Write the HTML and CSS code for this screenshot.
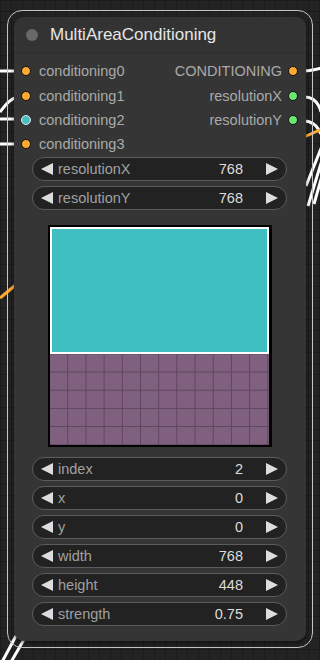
FILE: index.html
```
<!DOCTYPE html>
<html lang="en">
<head>
    <meta charset="UTF-8">
    <meta name="viewport" content="width=device-width, initial-scale=1.0">
    <title>MultiAreaConditioning</title>
    <link rel="stylesheet" href="styles.css">
</head>
<body>

<svg class="wires" width="320" height="660" viewBox="0 0 320 660">
    <g fill="none" stroke="#fff" stroke-width="3">
        <path d="M0 71 L18 71"/>
        <path d="M0 112 C5 106, 9 99, 18 97"/>
        <path d="M0 119 L18 119"/>
        <path d="M0 144 L18 144"/>
        <path d="M2 662 L17 634"/>
        <path d="M11 662 L26 636"/>
        <path d="M304 71 C312 71, 316 69, 322 68"/>
        <path d="M304 97 C314 97, 319 104, 321 112"/>
        <path d="M304 121 C313 121, 318 127, 321 134"/>
        <path d="M322 146 L306 186"/>
        <path d="M322 160 L308 206"/>
        <path d="M322 176 L314 204"/>
    </g>
    <g fill="none" stroke="#ffa931" stroke-width="3">
        <path d="M0 298 L18 283"/>
        <path d="M304 137 L322 129"/>
    </g>
</svg>

<div class="selected">
    <div class="node">
        <div class="title">
            <span class="title-dot"></span>
            <span class="title-text">MultiAreaConditioning</span>
        </div>

        <div class="slots">
            <div class="slot-row">
                <div class="slot"><span class="dot cond"></span>conditioning0</div>
                <div class="slot out">CONDITIONING<span class="dot cond"></span></div>
            </div>
            <div class="slot-row">
                <div class="slot"><span class="dot cond"></span>conditioning1</div>
                <div class="slot out">resolutionX<span class="dot int"></span></div>
            </div>
            <div class="slot-row">
                <div class="slot"><span class="dot active"></span>conditioning2</div>
                <div class="slot out">resolutionY<span class="dot int"></span></div>
            </div>
            <div class="slot-row">
                <div class="slot"><span class="dot cond"></span>conditioning3</div>
            </div>
        </div>

        <div class="widgets">
            <div class="widget"><span class="arrow-l"></span><span class="w-label">resolutionX</span><span class="w-value">768</span><span class="arrow-r"></span></div>
            <div class="widget"><span class="arrow-l"></span><span class="w-label">resolutionY</span><span class="w-value">768</span><span class="arrow-r"></span></div>
        </div>

        <div class="preview">
            <div class="area" style="height: 127px"></div>
        </div>

        <div class="widgets">
            <div class="widget"><span class="arrow-l"></span><span class="w-label">index</span><span class="w-value">2</span><span class="arrow-r"></span></div>
            <div class="widget"><span class="arrow-l"></span><span class="w-label">x</span><span class="w-value">0</span><span class="arrow-r"></span></div>
            <div class="widget"><span class="arrow-l"></span><span class="w-label">y</span><span class="w-value">0</span><span class="arrow-r"></span></div>
            <div class="widget"><span class="arrow-l"></span><span class="w-label">width</span><span class="w-value">768</span><span class="arrow-r"></span></div>
            <div class="widget"><span class="arrow-l"></span><span class="w-label">height</span><span class="w-value">448</span><span class="arrow-r"></span></div>
            <div class="widget"><span class="arrow-l"></span><span class="w-label">strength</span><span class="w-value">0.75</span><span class="arrow-r"></span></div>
        </div>
    </div>
</div>

</body>
</html>
```

FILE: styles.css
```
body {
    margin: 0;
    width: 320px;
    height: 660px;
    overflow: hidden;
    position: relative;
    font-family: "Liberation Sans", Arial, sans-serif;
    background-color: #232323;
    background-image:
        linear-gradient(to right, #1b1b1b 1px, transparent 1px),
        linear-gradient(to bottom, #1b1b1b 1px, transparent 1px);
    background-size: 11px 11px;
}

.wires {
    position: absolute;
    left: 0;
    top: 0;
}

/* selection outline round the node */
.selected {
    position: relative;
    margin: 10px 0 0 7px;
    width: 292px;
    padding: 6px;
    border: 1px solid #c4c4c4;
    border-radius: 15px;
}

.node {
    background: #353535;
    border-radius: 10px;
    padding-bottom: 15px;
    box-shadow: 0 2px 4px rgba(0, 0, 0, 0.5);
}

.title {
    height: 37px;
    display: flex;
    align-items: center;
    padding-left: 12px;
    background: #333;
    border-radius: 10px 10px 0 0;
    border-bottom: 1px solid #2e2e2e;
    box-sizing: border-box;
}
.title-dot {
    width: 12px;
    height: 12px;
    border-radius: 50%;
    background: #686868;
}
.title-text {
    margin-left: 12px;
    color: #e6e6e6;
    font-size: 17px;
}

.slots {
    padding-top: 5px;
}
.slot-row {
    height: 24.4px;
    display: flex;
    justify-content: space-between;
    align-items: center;
}
.slot {
    display: flex;
    align-items: center;
    color: #aaa;
    font-size: 14.5px;
}
.slot .dot {
    margin: 0 8px 0 7px;
}
.slot.out .dot {
    margin: 0 8px 0 6px;
}
.dot {
    width: 8px;
    height: 8px;
    border-radius: 50%;
    border: 1px solid #111;
}
.dot.cond {
    background: #ffa931;
}
.dot.int {
    background: #6ee66e;
}
.dot.active {
    background: #45c1c1;
    border-color: #e8e8e8;
}

.widgets {
    display: flex;
    flex-direction: column;
    gap: 5px;
    padding: 0 19px 0 18px;
}
.widget {
    height: 24px;
    box-sizing: border-box;
    display: flex;
    align-items: center;
    padding: 0 8px;
    background: #222;
    border: 1px solid #5c5c5c;
    border-radius: 12px;
    font-size: 14.5px;
}
.arrow-l {
    width: 0;
    height: 0;
    border-top: 6px solid transparent;
    border-bottom: 6px solid transparent;
    border-right: 12px solid #ddd;
}
.arrow-r {
    width: 0;
    height: 0;
    margin-left: 23px;
    border-top: 6px solid transparent;
    border-bottom: 6px solid transparent;
    border-left: 12px solid #ddd;
}
.w-label {
    flex: 1;
    margin-left: 5px;
    color: #a0a0a0;
}
.w-value {
    color: #ddd;
}

.preview {
    margin: 15px 0 10px 34px;
    width: 219px;
    height: 218px;
    border: 2px solid #000;
    border-right-width: 3px;
    background-color: #80607f;
    background-image:
        linear-gradient(to right, transparent calc(100% - 1px), #5e465e 0),
        linear-gradient(to bottom, transparent calc(100% - 1px), #5e465e 0);
    background-size: 18.2px 18.2px;
}
.area {
    box-sizing: border-box;
    width: 100%;
    background: #3fbfbf;
    border: 2px solid #fff;
}
```
